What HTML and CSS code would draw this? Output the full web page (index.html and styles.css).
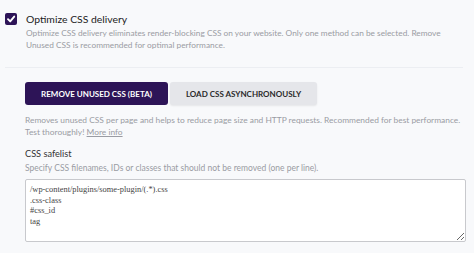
FILE: index.html
```html
<!DOCTYPE html>
<html>
<head>
<meta charset="utf-8">
<link rel="stylesheet" href="styles.css">
</head>
<body>
<div class="panel">
  <div class="head">
    <span class="check"><svg viewBox="0 0 12 12" width="12" height="12"><path d="M3 6.2 L5.2 8.4 L9.2 3.6" fill="none" stroke="#fff" stroke-width="1.9" stroke-linecap="round" stroke-linejoin="round"/></svg></span>
    <div class="head-text">
      <div class="title">Optimize CSS delivery</div>
      <p class="desc">Optimize CSS delivery eliminates render-blocking CSS on your website. Only one method can be selected. Remove Unused CSS is recommended for optimal performance.</p>
    </div>
  </div>
  <div class="body">
    <div class="tabs">
      <button class="btn btn-active">REMOVE UNUSED CSS (BETA)</button>
      <button class="btn btn-plain">LOAD CSS ASYNCHRONOUSLY</button>
    </div>
    <p class="desc note">Removes unused CSS per page and helps to reduce page size and HTTP requests. Recommended for best performance. Test thoroughly! <a href="#" class="link">More info</a></p>
    <div class="label">CSS safelist</div>
    <p class="desc hint">Specify CSS filenames, IDs or classes that should not be removed (one per line).</p>
    <textarea class="area">/wp-content/plugins/some-plugin/(.*).css
.css-class
#css_id
tag</textarea>
  </div>
</div>
</body>
</html>
```
FILE: styles.css
```css
html, body {
  margin: 0;
  padding: 0;
  background: #f8f9fb;
}
body {
  font-family: Lato, "Open Sans", sans-serif;
  width: 474px;
  height: 253px;
  overflow: hidden;
}
.panel {
  padding: 11px 11px 0 5px;
}
.head {
  display: flex;
  gap: 9px;
  align-items: flex-start;
  padding-bottom: 16px;
  border-bottom: 1px solid #eceef2;
}
.check {
  width: 12px;
  height: 12px;
  background: #2d1457;
  border-radius: 2px;
  flex: none;
  margin-top: 2px;
  display: flex;
}
.head-text {
  flex: 1;
}
.title {
  font-size: 10.4px;
  color: #222;
  line-height: 16px;
}
.desc {
  margin: 0;
  font-size: 8.3px;
  line-height: 12px;
  color: #9a9ca3;
}
.body {
  padding: 14px 0 0 20px;
}
.tabs {
  display: flex;
  gap: 2px;
}
.btn {
  font-family: inherit;
  font-size: 8px;
  font-weight: 700;
  white-space: nowrap;
  height: 23px;
  border: 0;
  border-radius: 3px;
  padding: 0;
  width: 143px;
  cursor: pointer;
}
.btn-active {
  background: #2d1457;
  color: #fff;
}
.btn-plain {
  background: #e5e6ea;
  color: #2a2a2a;
  width: 147px;
  box-shadow: 0 1px 2px rgba(0,0,0,0.08);
}
.note {
  margin-top: 9px;
  margin-right: 2px;
  font-size: 8.4px;
}
.link {
  color: #9a9ca3;
}
.label {
  margin-top: 9px;
  font-size: 9.2px;
  line-height: 14px;
  color: #333;
}
.hint {
  margin-top: 1px;
  font-size: 8.5px;
}
.area {
  display: block;
  box-sizing: border-box;
  margin-top: 5px;
  width: 441px;
  height: 63px;
  border: 1px solid #c8c9cd;
  border-radius: 2px;
  background: #fff;
  font-family: "Liberation Serif", serif;
  font-size: 8.4px;
  line-height: 10.5px;
  color: #444;
  padding: 5px 4px;
  resize: both;
}
```
